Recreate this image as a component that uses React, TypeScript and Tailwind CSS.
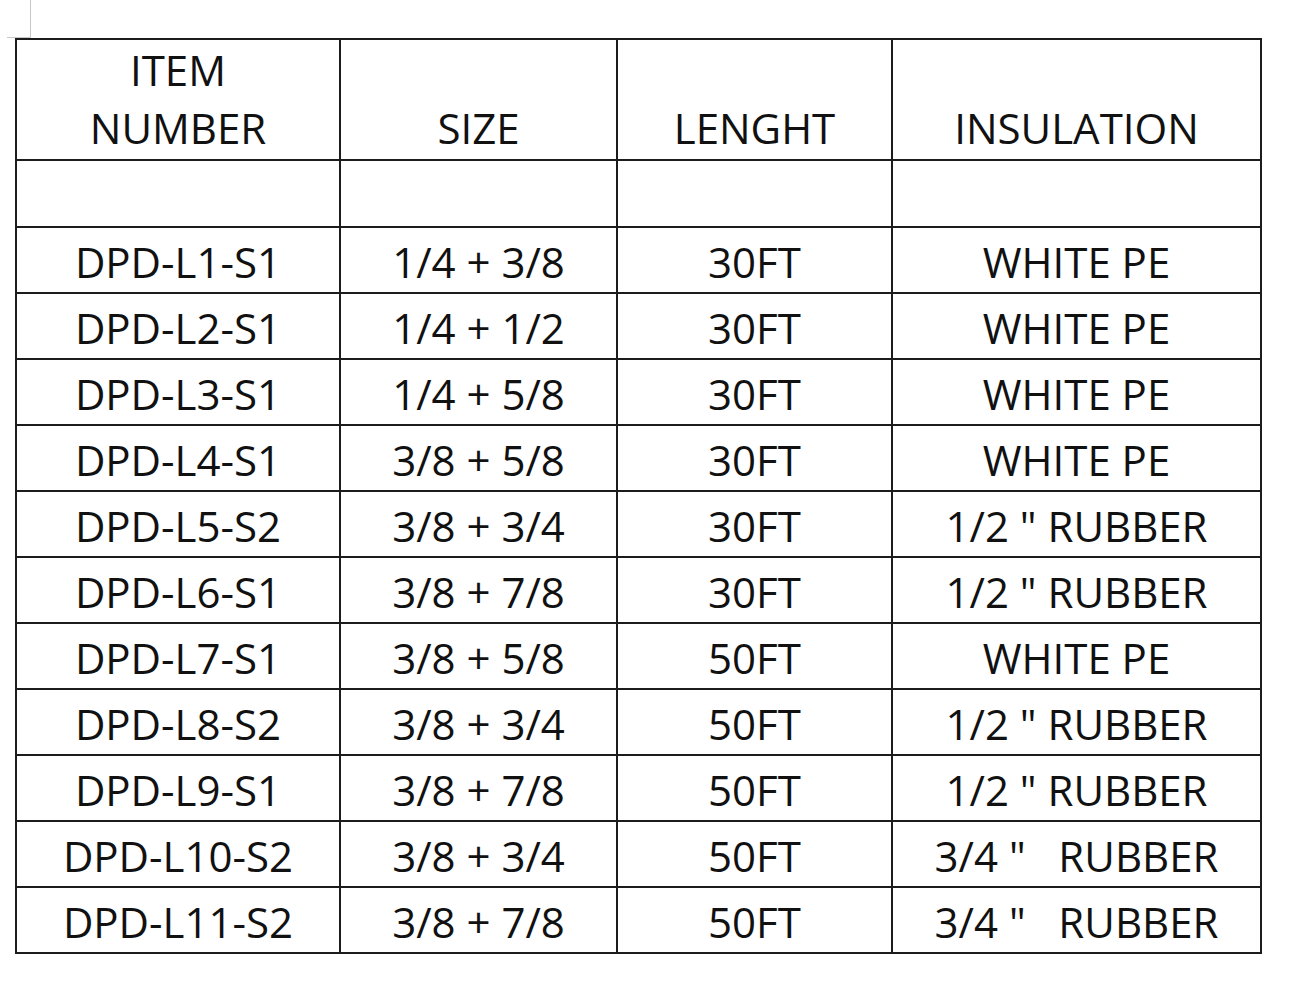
const rows: [string, string, string, string][] = [
  ["DPD-L1-S1", "1/4 + 3/8", "30FT", "WHITE PE"],
  ["DPD-L2-S1", "1/4 + 1/2", "30FT", "WHITE PE"],
  ["DPD-L3-S1", "1/4 + 5/8", "30FT", "WHITE PE"],
  ["DPD-L4-S1", "3/8 + 5/8", "30FT", "WHITE PE"],
  ["DPD-L5-S2", "3/8 + 3/4", "30FT", '1/2 " RUBBER'],
  ["DPD-L6-S1", "3/8 + 7/8", "30FT", '1/2 " RUBBER'],
  ["DPD-L7-S1", "3/8 + 5/8", "50FT", "WHITE PE"],
  ["DPD-L8-S2", "3/8 + 3/4", "50FT", '1/2 " RUBBER'],
  ["DPD-L9-S1", "3/8 + 7/8", "50FT", '1/2 " RUBBER'],
  ["DPD-L10-S2", "3/8 + 3/4", "50FT", '3/4 "   RUBBER'],
  ["DPD-L11-S2", "3/8 + 7/8", "50FT", '3/4 "   RUBBER'],
];

const cell = "border-2 border-[#1c1c1c] text-center whitespace-pre p-0";

export default function App() {
  return (
    <div className="relative min-h-[1000px] w-[1300px] bg-white font-['Open_Sans',sans-serif] text-[42px] text-[#111]">
      {/* page corner mark from the document view */}
      <div className="absolute left-[30px] top-0 h-[38px] w-px bg-[#c8c8c8]" />
      <div className="absolute left-[7px] top-[37px] h-px w-[24px] bg-[#c8c8c8]" />

      <div className="pl-[15px] pt-[38px]">
        <table className="w-[1245px] table-fixed border-collapse">
          <colgroup>
            <col className="w-[324px]" />
            <col className="w-[277px]" />
            <col className="w-[275px]" />
            <col className="w-[369px]" />
          </colgroup>
          <thead>
            <tr className="h-[121px] align-bottom">
              <th className={`${cell} font-normal leading-[58px] pb-[2px]`}>
                ITEM
                <br />
                NUMBER
              </th>
              <th className={`${cell} font-normal leading-[58px] pb-[2px]`}>SIZE</th>
              <th className={`${cell} font-normal leading-[58px] pb-[2px]`}>LENGHT</th>
              <th className={`${cell} font-normal leading-[58px] pb-[2px]`}>INSULATION</th>
            </tr>
          </thead>
          <tbody>
            <tr className="h-[67px]">
              <td className={cell} />
              <td className={cell} />
              <td className={cell} />
              <td className={cell} />
            </tr>
            {rows.map((r) => (
              <tr key={r[0]}>
                {r.map((v, i) => (
                  <td key={i} className={`${cell} leading-[61px] pt-[3px]`}>
                    {v}
                  </td>
                ))}
              </tr>
            ))}
          </tbody>
        </table>
      </div>
    </div>
  );
}
